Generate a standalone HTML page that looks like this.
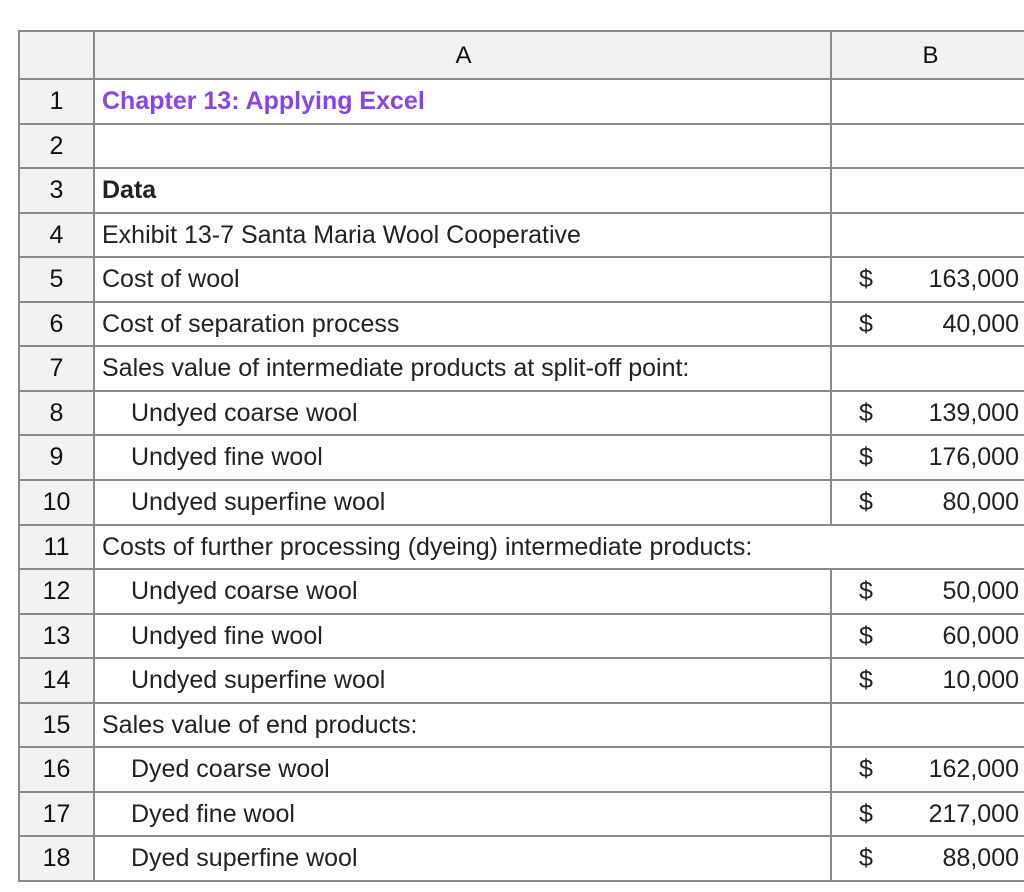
<!DOCTYPE html>
<html><head><meta charset="utf-8"><style>
body{margin:0;width:1024px;height:892px;background:#fff;position:relative;overflow:hidden;font-family:"Liberation Sans",Arial,sans-serif;color:#222;}
.r{position:absolute;left:18px;width:1040px;border-top:2px solid #8a8a8a;box-sizing:border-box;}
.n{position:absolute;left:0;top:0;width:77px;height:100%;background:#f2f2f2;border-right:2px solid #8a8a8a;border-left:2px solid #8a8a8a;box-sizing:border-box;text-align:center;font-size:25px;line-height:43px;color:#111;}
.a{position:absolute;left:84px;top:0;font-size:25px;line-height:42px;white-space:nowrap;}
.i{left:113px;}
.b{position:absolute;left:812px;top:0;width:2px;height:100%;background:#8a8a8a;}
.d{position:absolute;left:841px;font-size:25px;line-height:42px;}
.v{position:absolute;right:39px;font-size:25px;line-height:42px;text-align:right;}
</style></head><body>
<div class="r" style="top:30px;height:48px;background:#f2f2f2;">
 <div class="n" style="background:#f2f2f2"></div>
 <div class="b"></div>
 <div style="position:absolute;left:77px;width:737px;text-align:center;font-size:24px;line-height:48px;color:#111">A</div>
 <div style="position:absolute;left:814px;width:197px;text-align:center;font-size:24px;line-height:48px;color:#111">B</div>
</div>
<div class="r" style="top:78px;height:45px"><div class="n">1</div><div class="a" style="color:#8b44e8;font-weight:bold">Chapter 13: Applying Excel</div><div class="b"></div></div>
<div class="r" style="top:123px;height:44px"><div class="n">2</div><div class="b"></div></div>
<div class="r" style="top:167px;height:45px"><div class="n">3</div><div class="a" style="font-weight:bold">Data</div><div class="b"></div></div>
<div class="r" style="top:212px;height:44px"><div class="n">4</div><div class="a">Exhibit 13-7 Santa Maria Wool Cooperative</div><div class="b"></div></div>
<div class="r" style="top:256px;height:45px"><div class="n">5</div><div class="a">Cost of wool</div><div class="b"></div><div class="d">$</div><div class="v">163,000</div></div>
<div class="r" style="top:301px;height:44px"><div class="n">6</div><div class="a">Cost of separation process</div><div class="b"></div><div class="d">$</div><div class="v">40,000</div></div>
<div class="r" style="top:345px;height:45px"><div class="n">7</div><div class="a">Sales value of intermediate products at split-off point:</div><div class="b"></div></div>
<div class="r" style="top:390px;height:44px"><div class="n">8</div><div class="a i">Undyed coarse wool</div><div class="b"></div><div class="d">$</div><div class="v">139,000</div></div>
<div class="r" style="top:434px;height:45px"><div class="n">9</div><div class="a i">Undyed fine wool</div><div class="b"></div><div class="d">$</div><div class="v">176,000</div></div>
<div class="r" style="top:479px;height:45px"><div class="n">10</div><div class="a i">Undyed superfine wool</div><div class="b"></div><div class="d">$</div><div class="v">80,000</div></div>
<div class="r" style="top:524px;height:44px"><div class="n">11</div><div class="a">Costs of further processing (dyeing) intermediate products:</div></div>
<div class="r" style="top:568px;height:45px"><div class="n">12</div><div class="a i">Undyed coarse wool</div><div class="b"></div><div class="d">$</div><div class="v">50,000</div></div>
<div class="r" style="top:613px;height:44px"><div class="n">13</div><div class="a i">Undyed fine wool</div><div class="b"></div><div class="d">$</div><div class="v">60,000</div></div>
<div class="r" style="top:657px;height:45px"><div class="n">14</div><div class="a i">Undyed superfine wool</div><div class="b"></div><div class="d">$</div><div class="v">10,000</div></div>
<div class="r" style="top:702px;height:44px"><div class="n">15</div><div class="a">Sales value of end products:</div><div class="b"></div></div>
<div class="r" style="top:746px;height:45px"><div class="n">16</div><div class="a i">Dyed coarse wool</div><div class="b"></div><div class="d">$</div><div class="v">162,000</div></div>
<div class="r" style="top:791px;height:44px"><div class="n">17</div><div class="a i">Dyed fine wool</div><div class="b"></div><div class="d">$</div><div class="v">217,000</div></div>
<div class="r" style="top:835px;height:47px;border-bottom:2px solid #8a8a8a"><div class="n">18</div><div class="a i">Dyed superfine wool</div><div class="b"></div><div class="d">$</div><div class="v">88,000</div></div>
</body></html>
